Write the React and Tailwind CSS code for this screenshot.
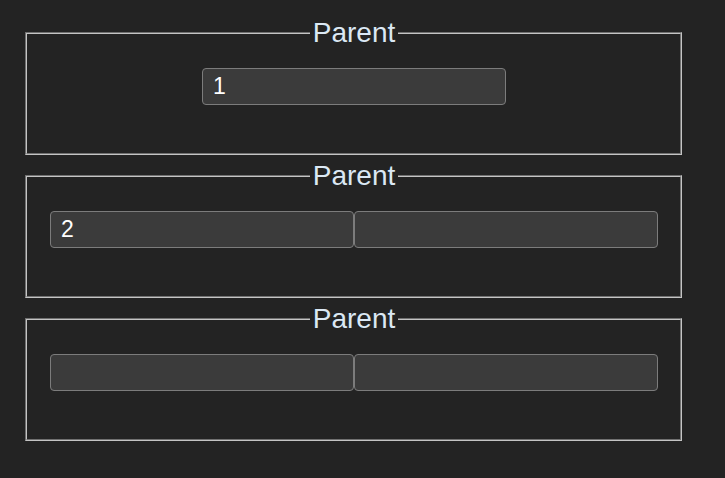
import React from "react";

function Field({ value }) {
  return (
    <input
      defaultValue={value}
      className="h-[37px] w-[304px] rounded-[4px] border border-[#7c7c7c] bg-[#3b3b3b] px-[10px] text-[23px] text-white outline-none"
      style={{ fontFamily: '"Liberation Sans", Arial, sans-serif' }}
    />
  );
}

function Group({ children }) {
  return (
    <fieldset className="w-[657px] border-2 border-[#c4c4c4] [border-style:groove] pl-[23px] pr-[22px] pt-[19px] pb-[48px]">
      <legend className="mx-auto px-[3px] text-[28px] leading-8 text-[#dbe8f4]">
        Parent
      </legend>
      {children}
    </fieldset>
  );
}

export default function App() {
  return (
    <div
      className="flex h-[478px] w-full flex-col gap-[5px] bg-[#232323] pl-[25px] pt-[17px]"
      style={{ fontFamily: '"Liberation Sans", Arial, sans-serif' }}
    >
      <Group>
        <div className="flex justify-center">
          <Field value="1" />
        </div>
      </Group>
      <Group>
        <div className="flex">
          <Field value="2" />
          <Field value="" />
        </div>
      </Group>
      <Group>
        <div className="flex">
          <Field value="" />
          <Field value="" />
        </div>
      </Group>
    </div>
  );
}
